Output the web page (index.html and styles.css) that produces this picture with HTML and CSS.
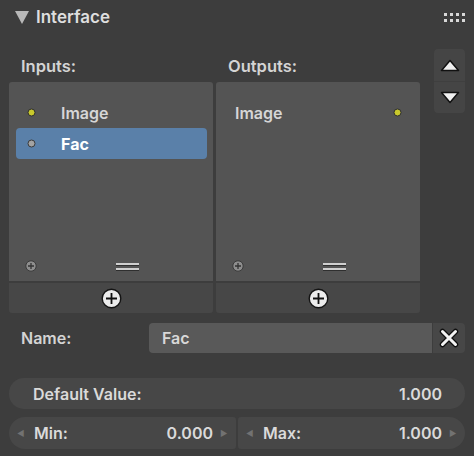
FILE: index.html
```html
<!DOCTYPE html>
<html>
<head>
<meta charset="utf-8">
<link rel="stylesheet" href="styles.css">
</head>
<body>
<div class="panel">
  <div class="header">
    <svg class="tri" width="14" height="14" viewBox="0 0 14 14"><polygon points="0,0 14,0 7,13" fill="#b8b8b8"/></svg>
    <span class="title">Interface</span>
    <svg class="grip" width="21" height="9" viewBox="0 0 21 9">
      <g fill="#d8d8d8">
        <rect x="0" y="0" width="3" height="3"/><rect x="6" y="0" width="3" height="3"/><rect x="12" y="0" width="3" height="3"/><rect x="18" y="0" width="3" height="3"/>
        <rect x="0" y="6" width="3" height="3"/><rect x="6" y="6" width="3" height="3"/><rect x="12" y="6" width="3" height="3"/><rect x="18" y="6" width="3" height="3"/>
      </g>
    </svg>
  </div>

  <div class="iface">
    <div class="lists">
      <div class="col">
        <div class="label">Inputs:</div>
        <div class="list">
          <div class="items">
            <div class="row in">
              <svg class="dot" width="9" height="9" viewBox="0 0 9 9"><circle cx="4.5" cy="4.5" r="3.5" fill="#c9c92c" stroke="#2e2e2e" stroke-width="1"/></svg>
              <span class="name">Image</span>
            </div>
            <div class="row in sel">
              <svg class="dot" width="9" height="9" viewBox="0 0 9 9"><circle cx="4.5" cy="4.5" r="3.5" fill="#a3a3a3" stroke="#3a3a3a" stroke-width="1"/></svg>
              <span class="name">Fac</span>
            </div>
          </div>
          <div class="foot">
            <svg class="smallplus" width="12" height="12" viewBox="0 0 12 12"><circle cx="6" cy="6" r="5.2" fill="#8e8e8e" stroke="#3a3a3a" stroke-width="1"/><path d="M6 3v6M3 6h6" stroke="#333" stroke-width="1.3"/></svg>
            <svg class="handle" width="23" height="8" viewBox="0 0 23 8"><rect x="0" y="0" width="23" height="2" fill="#cfcfcf"/><rect x="0" y="2" width="23" height="1" fill="#2f2f2f"/><rect x="0" y="5" width="23" height="2" fill="#cfcfcf"/><rect x="0" y="7" width="23" height="1" fill="#2f2f2f"/></svg>
          </div>
        </div>
        <div class="addrow">
          <svg width="21" height="21" viewBox="0 0 21 21"><circle cx="10.5" cy="10.5" r="9.3" fill="#ececec" stroke="#141414" stroke-width="1.4"/><path d="M10.5 5v11M5 10.5h11" stroke="#111" stroke-width="1.8"/></svg>
        </div>
      </div>
      <div class="col">
        <div class="label">Outputs:</div>
        <div class="list">
          <div class="items">
            <div class="row out">
              <span class="name">Image</span>
              <svg class="dot" width="9" height="9" viewBox="0 0 9 9"><circle cx="4.5" cy="4.5" r="3.5" fill="#c9c92c" stroke="#2e2e2e" stroke-width="1"/></svg>
            </div>
          </div>
          <div class="foot">
            <svg class="smallplus" width="12" height="12" viewBox="0 0 12 12"><circle cx="6" cy="6" r="5.2" fill="#8e8e8e" stroke="#3a3a3a" stroke-width="1"/><path d="M6 3v6M3 6h6" stroke="#333" stroke-width="1.3"/></svg>
            <svg class="handle" width="23" height="8" viewBox="0 0 23 8"><rect x="0" y="0" width="23" height="2" fill="#cfcfcf"/><rect x="0" y="2" width="23" height="1" fill="#2f2f2f"/><rect x="0" y="5" width="23" height="2" fill="#cfcfcf"/><rect x="0" y="7" width="23" height="1" fill="#2f2f2f"/></svg>
          </div>
        </div>
        <div class="addrow">
          <svg width="21" height="21" viewBox="0 0 21 21"><circle cx="10.5" cy="10.5" r="9.3" fill="#ececec" stroke="#141414" stroke-width="1.4"/><path d="M10.5 5v11M5 10.5h11" stroke="#111" stroke-width="1.8"/></svg>
        </div>
      </div>
    </div>
    <div class="side">
      <div class="updown">
        <svg width="20" height="13" viewBox="0 0 20 13"><polygon points="10,1.5 18.5,11.5 1.5,11.5" fill="#f0f0f0" stroke="#111" stroke-width="1.5" stroke-linejoin="round"/></svg>
      </div>
      <div class="updown">
        <svg width="20" height="13" viewBox="0 0 20 13"><polygon points="1.5,1.5 18.5,1.5 10,11.5" fill="#f0f0f0" stroke="#111" stroke-width="1.5" stroke-linejoin="round"/></svg>
      </div>
    </div>
  </div>

  <div class="namerow">
    <span class="namelabel">Name:</span>
    <div class="field">Fac</div>
    <div class="xbtn">
      <svg width="20" height="20" viewBox="0 0 20 20"><path d="M3.5 3.5L16.5 16.5M16.5 3.5L3.5 16.5" stroke="#111" stroke-width="5.5" stroke-linecap="round"/><path d="M3.5 3.5L16.5 16.5M16.5 3.5L3.5 16.5" stroke="#f4f4f4" stroke-width="3" stroke-linecap="round"/></svg>
    </div>
  </div>

  <div class="pill default">
    <span>Default Value:</span>
    <span>1.000</span>
  </div>

  <div class="minmax">
    <div class="pill num left">
      <span class="arr">◀</span>
      <span class="lbl">Min:</span>
      <span class="val">0.000</span>
      <span class="arr">▶</span>
    </div>
    <div class="pill num right">
      <span class="arr">◀</span>
      <span class="lbl">Max:</span>
      <span class="val">1.000</span>
      <span class="arr">▶</span>
    </div>
  </div>
</div>
</body>
</html>
```

FILE: styles.css
```css
html, body {
  margin: 0;
  padding: 0;
  background: #3d3d3d;
}
body {
  width: 474px;
  height: 456px;
  overflow: hidden;
  font-family: Inter, "Liberation Sans", sans-serif;
  font-weight: 600;
  color: #d6d6d6;
}
.panel {
  padding: 0 9px;
}
.header {
  height: 34px;
  display: flex;
  align-items: center;
  padding-left: 6px;
}
.tri {
  margin-right: 7px;
  margin-top: 1px;
}
.title {
  font-size: 17px;
  color: #dedede;
  flex: 1;
}
.iface {
  margin-top: 16px;
  display: flex;
  align-items: flex-start;
}
.lists {
  display: flex;
  gap: 3px;
  width: 411px;
}
.col {
  flex: 1;
  display: flex;
  flex-direction: column;
}
.label {
  height: 32px;
  line-height: 32px;
  padding-left: 12px;
  font-size: 16.5px;
  color: #d4d4d4;
}
.list {
  height: 199px;
  background: #545454;
  border-radius: 3px 3px 0 0;
  display: flex;
  flex-direction: column;
}
.items {
  flex: 1;
  padding: 15px 6px 0 7px;
  display: flex;
  flex-direction: column;
}
.row {
  height: 31px;
  display: flex;
  align-items: center;
  font-size: 16px;
  border-radius: 4px;
}
.row.in .dot {
  margin-left: 11px;
  margin-right: 25px;
}
.row.out {
  padding-left: 12px;
  padding-right: 12px;
  justify-content: space-between;
}
.row.sel {
  background: #5a80a9;
  color: #ffffff;
  font-weight: 700;
}
.foot {
  height: 30px;
  display: flex;
  align-items: flex-start;
  padding-left: 16px;
}
.smallplus {
  margin-top: 9px;
}
.handle {
  margin-left: 79px;
  margin-top: 12px;
}
.addrow {
  margin-top: 2px;
  height: 30px;
  background: #474747;
  border-radius: 0 0 3px 3px;
  display: flex;
  align-items: center;
  justify-content: center;
}
.side {
  margin-left: 14px;
  margin-top: -1px;
  width: 31px;
  background: #454545;
  border-radius: 4px;
  display: flex;
  flex-direction: column;
}
.updown {
  height: 32px;
  display: flex;
  align-items: center;
  justify-content: center;
}
.updown + .updown {
  border-top: 1px solid #3f3f3f;
  height: 31px;
}
.namerow {
  margin-top: 10px;
  height: 30px;
  display: flex;
  align-items: center;
}
.namelabel {
  width: 140px;
  padding-left: 12px;
  box-sizing: border-box;
  font-size: 16px;
  color: #d4d4d4;
}
.field {
  flex: 1;
  height: 30px;
  line-height: 30px;
  background: #595959;
  border-radius: 4px 0 0 4px;
  padding-left: 13px;
  font-size: 16px;
  color: #d8d8d8;
}
.xbtn {
  margin-left: 1px;
  width: 32px;
  height: 30px;
  background: #474747;
  border-radius: 0 4px 4px 0;
  display: flex;
  align-items: center;
  justify-content: center;
}
.pill {
  height: 31px;
  background: #474747;
  border-radius: 15px;
  display: flex;
  align-items: center;
  font-size: 16px;
  color: #dadada;
}
.default {
  margin-top: 25px;
  justify-content: space-between;
  padding: 0 23px 0 24px;
}
.minmax {
  margin-top: 8px;
  display: flex;
  gap: 2px;
}
.num {
  flex: 1;
  height: 32px;
  padding: 0 8px;
}
.num.left {
  border-radius: 16px 3px 3px 16px;
}
.num.right {
  border-radius: 3px 16px 16px 3px;
}
.arr {
  font-size: 8px;
  color: #727272;
  width: 8px;
}
.lbl {
  flex: 1;
  margin-left: 9px;
}
.val {
  margin-right: 7px;
}
```
